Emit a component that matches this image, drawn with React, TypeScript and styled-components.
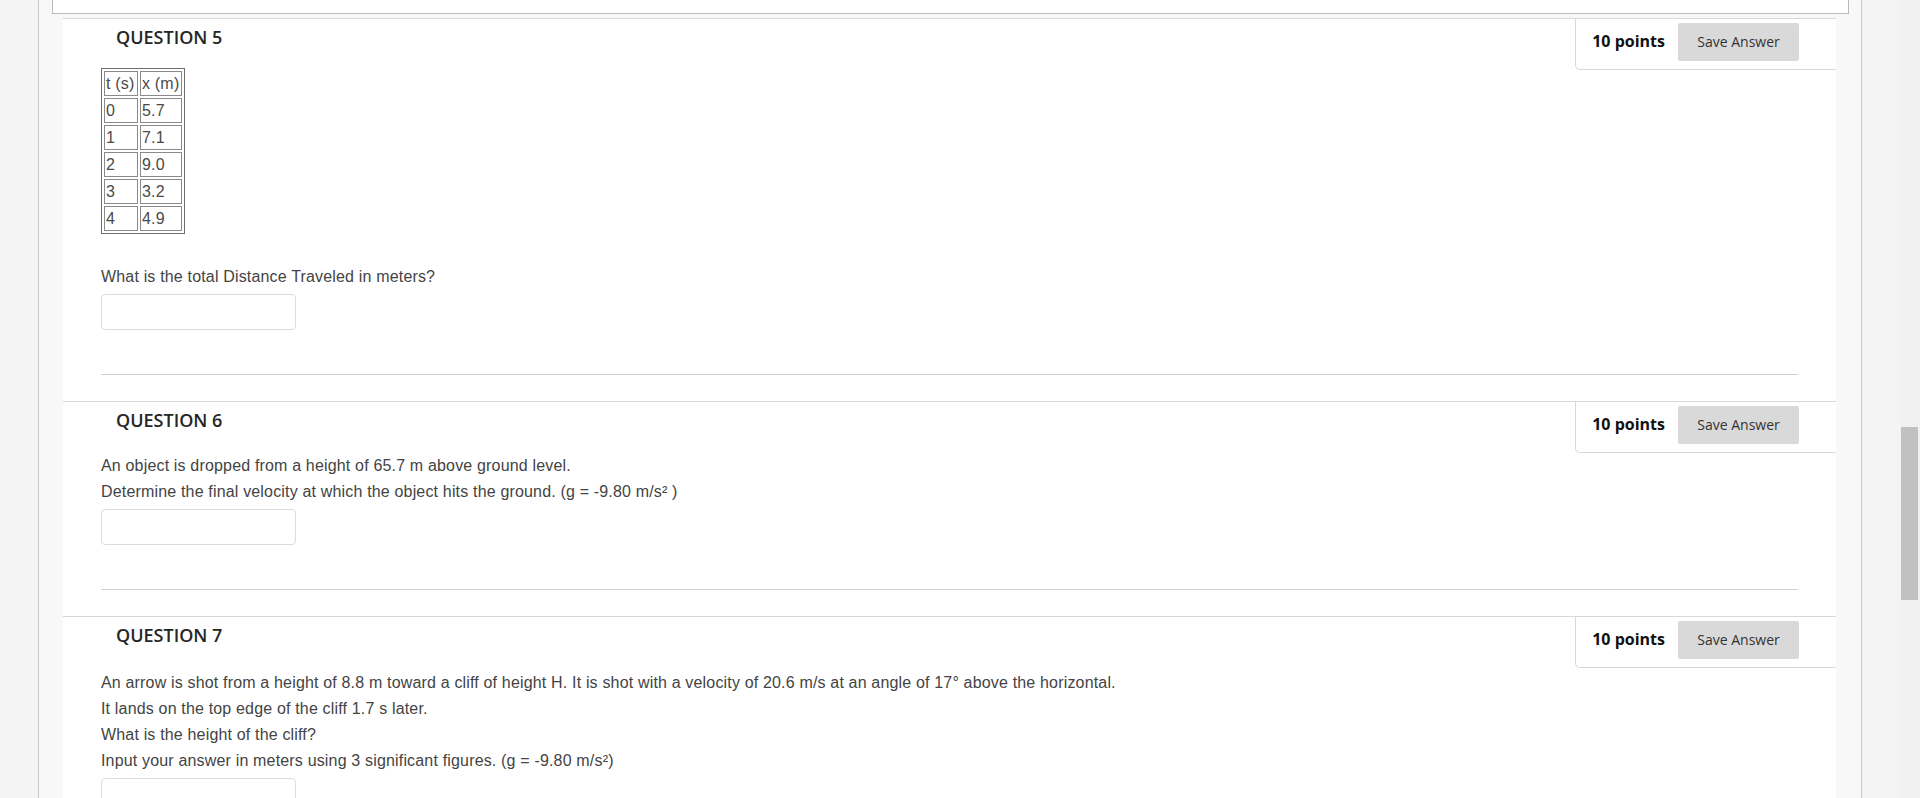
import React from "react";
import styled, { createGlobalStyle } from "styled-components";

const GlobalStyle = createGlobalStyle`
  html, body {
    margin: 0;
    padding: 0;
    height: 100%;
    overflow: hidden;
    background: #f4f4f4;
  }
  #root {
    height: 100%;
  }
`;

const Page = styled.div`
  display: flex;
  height: 100vh;
`;

const Gutter = styled.div`
  flex: none;
  width: 38px;
  background: #f4f4f4;
`;

const Column = styled.main`
  flex: 1;
  min-width: 0;
  overflow: hidden;
  background: #f8f8f8;
  border-left: 1px solid #c9c9c9;
  border-right: 1px solid #c9c9c9;
`;

const PrevBox = styled.div`
  height: 13px;
  margin: 0 12px 4px 13px;
  background: #fff;
  border: 1px solid #b9b9b9;
  border-top: none;
`;

const QuestionCard = styled.section`
  margin: 0 25px 0 24px;
  padding-bottom: 26px;
  background: #fff;
  border-top: 1px solid #d8d8d8;
`;

const PointsBox = styled.div`
  float: right;
  display: flex;
  align-items: flex-start;
  gap: 13px;
  height: 46px;
  padding: 4px 37px 0 16px;
  border-left: 1px solid #d8d8d8;
  border-bottom: 1px solid #d8d8d8;
  border-bottom-left-radius: 5px;
`;

const Points = styled.span`
  font: 700 16px/37px "Open Sans", sans-serif;
  color: #111;
`;

const SaveButton = styled.button`
  width: 121px;
  height: 38px;
  padding: 0 0 2px;
  border: none;
  border-radius: 2px;
  background: #d9d9d9;
  font: 400 14px "Open Sans", sans-serif;
  color: #333;
  cursor: pointer;
`;

const Heading = styled.h3`
  margin: 0;
  padding: 5px 0 0 53px;
  font: 600 18px/26px "Open Sans", sans-serif;
  color: #262626;
`;

const Body = styled.div`
  padding: 18px 38px 0;
  font: 16px/26px "Liberation Sans", Arial, sans-serif;
  letter-spacing: 0.17px;
  color: #444;
`;

const DataTable = styled.table`
  border: 1px solid #6e6e6e;
  border-collapse: separate;
  border-spacing: 2px;
  font: 16px/21px "Liberation Sans", Arial, sans-serif;
  letter-spacing: 0.2px;
  color: #4a4a4a;
  white-space: nowrap;

  td {
    border: 1px solid #8a8a8a;
    padding: 1px;
    text-align: left;
  }
  td:first-child {
    width: 30px;
  }
  td:last-child {
    width: 38px;
  }
`;

const Prompt = styled.div<{ $top: number }>`
  margin-top: ${(p) => p.$top}px;
`;

const AnswerInput = styled.input`
  display: block;
  box-sizing: border-box;
  width: 195px;
  height: 36px;
  margin-top: 4px;
  border: 1px solid #dcdcdc;
  border-radius: 4px;
  background: #fff;
`;

const Divider = styled.hr`
  height: 0;
  margin: 44px 0 0;
  border: none;
  border-top: 1px solid #d0d0d0;
`;

const ScrollTrack = styled.div`
  flex: none;
  width: 20px;
  background: #f1f1f1;
`;

const ScrollThumb = styled.div`
  height: 173px;
  margin: 427px 2px 0 1px;
  background: #c1c1c1;
`;

type Question = {
  num: number;
  table?: [string, string][];
  lines: string[];
  promptTop: number;
};

const questions: Question[] = [
  {
    num: 5,
    table: [
      ["t (s)", "x (m)"],
      ["0", "5.7"],
      ["1", "7.1"],
      ["2", "9.0"],
      ["3", "3.2"],
      ["4", "4.9"],
    ],
    lines: ["What is the total Distance Traveled in meters?"],
    promptTop: 30,
  },
  {
    num: 6,
    lines: [
      "An object is dropped from a height of 65.7 m above ground level.",
      "Determine the final velocity at which the object hits the ground. (g = -9.80 m/s² )",
    ],
    promptTop: 2,
  },
  {
    num: 7,
    lines: [
      "An arrow is shot from a height of 8.8 m toward a cliff of height H. It is shot with a velocity of 20.6 m/s at an angle of 17° above the horizontal.",
      "It lands on the top edge of the cliff 1.7 s later.",
      "What is the height of the cliff?",
      "Input your answer in meters using 3 significant figures. (g = -9.80 m/s²)",
    ],
    promptTop: 4,
  },
];

const QuestionBlock = ({ q }: { q: Question }) => (
  <QuestionCard>
    <PointsBox>
      <Points>10 points</Points>
      <SaveButton type="button">Save Answer</SaveButton>
    </PointsBox>
    <Heading>QUESTION {q.num}</Heading>
    <Body>
      {q.table && (
        <DataTable>
          <tbody>
            {q.table.map(([t, x]) => (
              <tr key={t}>
                <td>{t}</td>
                <td>{x}</td>
              </tr>
            ))}
          </tbody>
        </DataTable>
      )}
      <Prompt $top={q.promptTop}>
        {q.lines.map((line) => (
          <div key={line}>{line}</div>
        ))}
      </Prompt>
      <AnswerInput type="text" />
      <Divider />
    </Body>
  </QuestionCard>
);

const App = () => (
  <>
    <GlobalStyle />
    <Page>
      <Gutter />
      <Column>
        <PrevBox />
        {questions.map((q) => (
          <QuestionBlock key={q.num} q={q} />
        ))}
      </Column>
      <Gutter />
      <ScrollTrack>
        <ScrollThumb />
      </ScrollTrack>
    </Page>
  </>
);

export default App;
